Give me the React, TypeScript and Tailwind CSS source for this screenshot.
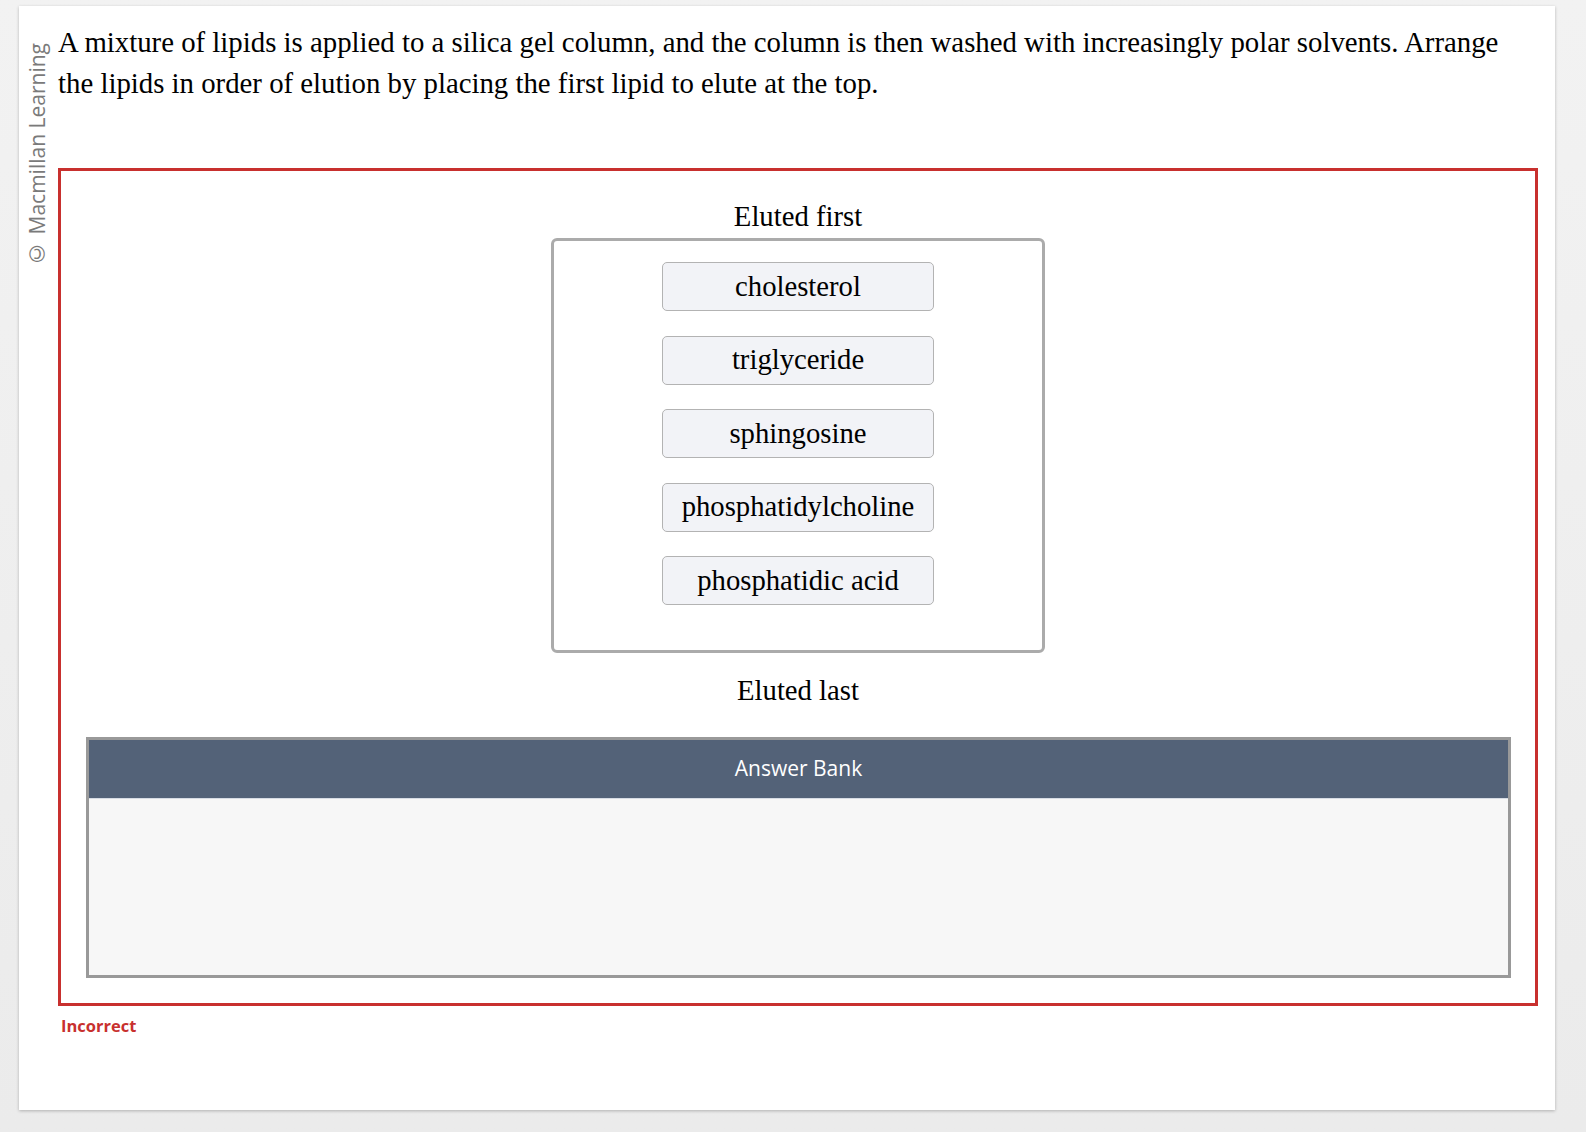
const items = [
  "cholesterol",
  "triglyceride",
  "sphingosine",
  "phosphatidylcholine",
  "phosphatidic acid",
];

const serif = "font-['Liberation_Serif','Times_New_Roman',serif]";
const sans = "font-['Open_Sans','Noto_Sans',sans-serif]";

export default function App() {
  return (
    <div className="h-[1132px] w-full overflow-hidden bg-gradient-to-b from-[#f2f2f2] to-[#ebebeb]">
      <div className="ml-[19px] pt-[6px]">
        <div className="flex h-[1104px] w-[1536px] bg-white shadow-[0_1px_3px_rgba(0,0,0,0.25)]">
          {/* watermark */}
          <div className="ml-[6px] mt-[37px] w-[25px] self-start">
            <div
              className={`${sans} rotate-180 text-[21px] leading-[25px] text-[#7a7a7a] [writing-mode:vertical-rl]`}
            >
              © Macmillan Learning
            </div>
          </div>

          <div className="ml-[8px] w-[1480px] pt-[16px]">
            <p className={`${serif} text-[28.8px] leading-[41px] text-black`}>
              A mixture of lipids is applied to a silica gel column, and the
              column is then washed with increasingly polar solvents. Arrange
              the lipids in order of elution by placing the first lipid to
              elute at the top.
            </p>

            <div className="mt-[64px] border-[3px] border-[#c8302e] px-[22px] pb-[25px] pt-[23px]">
              <div className="flex flex-col items-center">
                <div className={`${serif} text-[28.7px] leading-[44px] text-black`}>
                  Eluted first
                </div>
                <div className="flex w-[494px] flex-col items-center gap-[24.5px] rounded-[6px] border-[3px] border-[#ababab] pb-[45px] pt-[21px]">
                  {items.map((item) => (
                    <div
                      key={item}
                      className={`${serif} flex h-[49px] w-[272px] items-center justify-center rounded-[5px] border border-[#b3b3b3] bg-[#f2f3f7] text-[28.7px] text-black`}
                    >
                      {item}
                    </div>
                  ))}
                </div>
                <div
                  className={`${serif} mt-[15px] text-[28.7px] leading-[44px] text-black`}
                >
                  Eluted last
                </div>
              </div>

              <div className="mt-[25px] ml-[3px] w-[1425px] border-[3px] border-[#999999]">
                <div
                  className={`${sans} flex h-[59px] items-center justify-center border-b border-[#d7dce4] bg-[#536278] text-[21px] text-white`}
                >
                  Answer Bank
                </div>
                <div className="h-[176px] bg-[#f7f7f7]" />
              </div>
            </div>

            <div
              className={`${sans} ml-[3px] mt-[8px] text-[16.5px] font-bold leading-[24px] text-[#c8302e]`}
            >
              Incorrect
            </div>
          </div>
        </div>
      </div>
    </div>
  );
}
